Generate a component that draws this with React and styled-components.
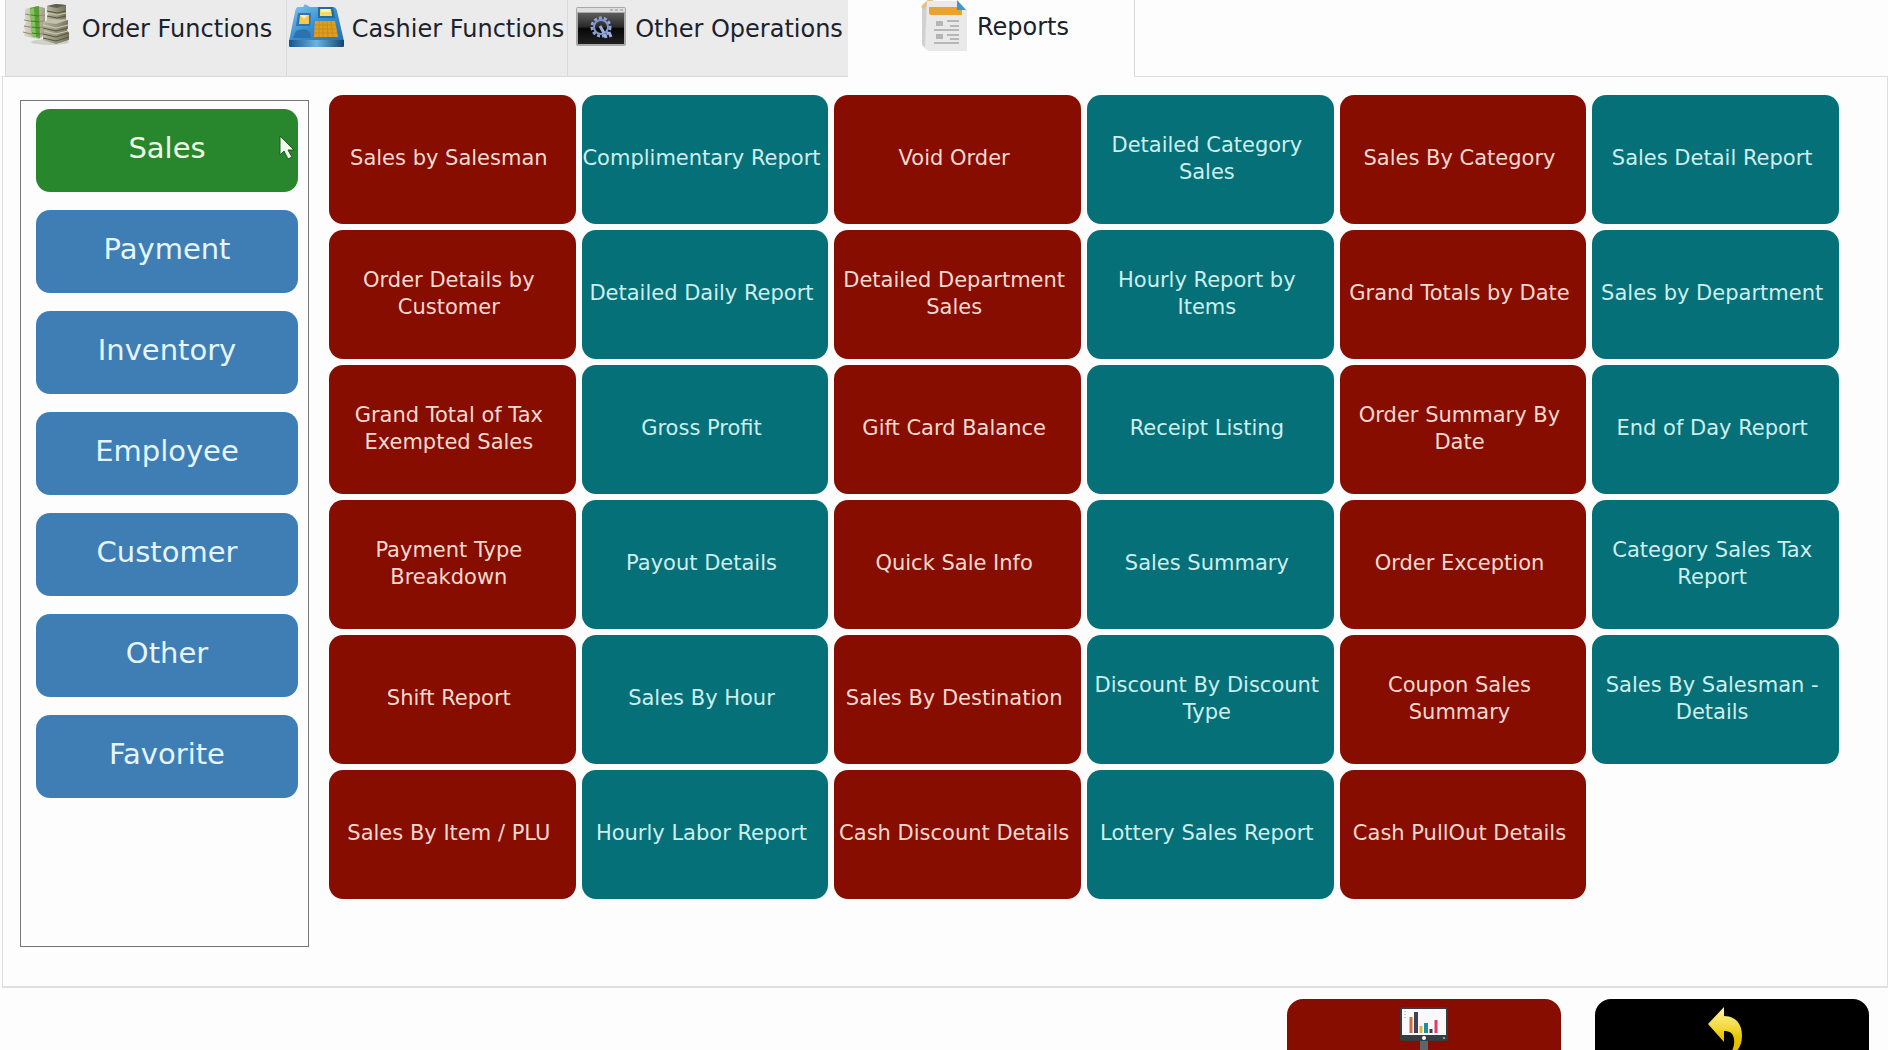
import React, { useState } from "react";
import styled, { createGlobalStyle } from "styled-components";

const GlobalStyle = createGlobalStyle`
  *, *::before, *::after { box-sizing: border-box; }
  body {
    margin: 0;
    background: #fdfdfd;
    font-family: "DejaVu Sans", Verdana, sans-serif;
  }
  button { font-family: inherit; cursor: pointer; }
`;

const Page = styled.div`
  height: 100vh;
  overflow: hidden;
  padding-left: 2px;
`;

const TabBar = styled.nav`
  display: flex;
  margin-bottom: -1px;
  padding-left: 3px;
`;

const Tab = styled.button`
  position: relative;
  display: flex;
  align-items: center;
  justify-content: center;
  gap: 8px;
  flex: 0 1 ${(p) => (p.$active ? 287 : 281)}px;
  height: 77px;
  padding: ${(p) => (p.$active ? "0 0 24px" : "0 2px 18px 0")};
  border: solid #d9d9d9;
  border-width: ${(p) => (p.$active ? "0 1px 0 0" : "0 0 1px 1px")};
  background: ${(p) => (p.$active ? "#fdfdfd" : "#ebebeb")};
  color: #1b222b;
  font-size: 24px;
  line-height: 28px;
  white-space: nowrap;

  svg { flex: none; }
`;

const Panel = styled.main`
  display: flex;
  align-items: flex-start;
  gap: 20px;
  padding: 18px 48px 39px 17px;
  border: 1px solid #dedede;
  border-bottom: 2px solid #e0e0e0;
`;

const Categories = styled.aside`
  flex: none;
  display: flex;
  flex-direction: column;
  gap: 18px;
  width: 289px;
  min-height: 847px;
  margin-top: 5px;
  padding: 8px 10px 8px 15px;
  border: 1px solid #757575;
`;

const CategoryButton = styled.button`
  position: relative;
  height: 83px;
  padding: 0 0 5px;
  border: 0;
  border-radius: 14px;
  background: ${(p) => (p.$active ? "#28872d" : "#3f7eb5")};
  color: ${(p) => (p.$active ? "#f0fbe6" : "#e6f5fc")};
  font-size: 29px;
  line-height: 34px;
`;

const Pointer = styled.svg`
  position: absolute;
  right: 3px;
  top: 26px;
`;

const ReportGrid = styled.section`
  flex: 1;
  display: grid;
  grid-template-columns: repeat(6, minmax(0, 1fr));
  grid-auto-rows: 129px;
  gap: 6px;
`;

const ReportTile = styled.button`
  padding: 0 7px 2px 0;
  border: 0;
  border-radius: 14px;
  background: ${(p) => (p.$tone === "red" ? "#870d00" : "#057077")};
  color: ${(p) => (p.$tone === "red" ? "#f5d9d0" : "#cdeeee")};
  font-size: 21px;
  line-height: 27px;
`;

const Footer = styled.footer`
  display: flex;
  justify-content: flex-end;
  gap: 34px;
  padding: 11px 19px 0 0;
`;

const ActionButton = styled.button`
  display: flex;
  justify-content: center;
  align-items: flex-start;
  width: 274px;
  height: 110px;
  padding: 8px 0 0;
  border: 0;
  border-radius: 16px;
  background: ${(p) => (p.$tone === "red" ? "#870d00" : "#000")};
`;

function MoneyIcon() {
  return (
    <svg width="56" height="56" viewBox="0 0 56 56" aria-hidden="true">
      <defs>
        <linearGradient id="billLight" x1="0" x2="1">
          <stop offset="0" stopColor="#d9d7c6" />
          <stop offset="1" stopColor="#a5a28a" />
        </linearGradient>
        <linearGradient id="billDark" x1="0" x2="1">
          <stop offset="0" stopColor="#b5b29c" />
          <stop offset="1" stopColor="#77745c" />
        </linearGradient>
      </defs>
      <ellipse cx="32" cy="41" rx="19" ry="3" fill="#cfcfcc" />
      <path d="M7 8l12-3 8 2v26l-6 5-15-3 1-5-1-5 2-4-1-6z" fill="url(#billLight)" />
      <path d="M7 13l10 2 10-1M6 19l11 2 10-1M6 25l11 2 10-1M5 31l12 3 10-2" fill="none" stroke="#8d8a72" />
      <path d="M12 7l9-2 1 32-8-2z" fill="#5a9c36" />
      <path d="M12 8l4-1 2 29-4-1z" fill="#86c45f" />
      <path d="M13 14l8 1M13 20l8 1M14 26l8 1M14 32l8 1" stroke="#42782a" />
      <path d="M29 5l9-2 10 1v17l-9 2-10-2v-5l1-3-1-3z" fill="url(#billDark)" />
      <path d="M29 5l9-2 10 1-9 3z" fill="#5f604c" />
      <path d="M29 10l10 2 9-2M29 15l10 2 9-2" fill="none" stroke="#55543f" />
      <path d="M29 12l10 2 9-2M29 18l10 2 9-2" fill="none" stroke="#c9c6b0" />
      <path d="M25 21l9-3 16 1v7l-1 3 2 3v7l-13 4-13-4v-6l2-3-2-3z" fill="url(#billDark)" />
      <path d="M25 21l9-3 16 1-12 4z" fill="#c4c1a9" />
      <path d="M25 27l13 3 12-3M25 33l13 3 13-4M25 37l13 3 13-4" fill="none" stroke="#55543f" />
      <path d="M25 24l13 3 12-3M26 30l12 3 12-3" fill="none" stroke="#cfccb6" />
    </svg>
  );
}

function RegisterIcon() {
  return (
    <svg width="56" height="56" viewBox="0 0 56 56" aria-hidden="true">
      <defs>
        <linearGradient id="registerBody" x1="0" y1="0" x2="1" y2="1">
          <stop offset="0" stopColor="#8acbf0" />
          <stop offset="0.5" stopColor="#3a8fce" />
          <stop offset="1" stopColor="#2372b4" />
        </linearGradient>
        <linearGradient id="registerBase" x1="0" x2="1">
          <stop offset="0" stopColor="#14568f" />
          <stop offset="0.5" stopColor="#69b4e4" />
          <stop offset="1" stopColor="#12466f" />
        </linearGradient>
      </defs>
      <path d="M10 6h5l2-3 5 3h23q3 0 4 4l7 30H1L7 11q1-5 3-5z" fill="url(#registerBody)" />
      <path d="M1 39h55v6q0 1-1 1H2q-1 0-1-1z" fill="url(#registerBase)" />
      <path d="M10 12h13l-1 13H8z" fill="#2c74b2" />
      <path d="M12 14h9v9h-10z" fill="#f0c94e" />
      <path d="M12 14h8l-4 4z" fill="#fff2a2" />
      <path d="M30 6h15l2 11H30z" fill="#246aa5" />
      <path d="M32 8h11l1 7H32z" fill="#f2dc64" />
      <path d="M33 8h9v3h-9z" fill="#fff4b0" />
      <path d="M27 20h20l3 16H26z" fill="#e0a01c" />
      <path d="M27 24h21M27 28h22M26 32h23M31 20v16M35 20v16M39 20l1 16M43 20l2 16" stroke="#c58c1f" />
      <path d="M8 30q9-4 14 1l1 6H5z" fill="#2a72b0" />
    </svg>
  );
}

function SettingsWindowIcon() {
  return (
    <svg width="56" height="56" viewBox="0 0 56 56" aria-hidden="true">
      <defs>
        <linearGradient id="windowBody" x1="0" y1="0" x2="0" y2="1">
          <stop offset="0" stopColor="#5c5c5c" />
          <stop offset="0.45" stopColor="#292929" />
          <stop offset="0.5" stopColor="#080808" />
          <stop offset="1" stopColor="#202020" />
        </linearGradient>
      </defs>
      <rect x="5" y="6" width="50" height="39" rx="2" fill="#a9a9a9" />
      <rect x="6" y="7" width="48" height="4" fill="#dedede" />
      <path d="M39 9h14" stroke="#919191" strokeDasharray="3 2" />
      <rect x="7" y="12" width="46" height="31" fill="url(#windowBody)" />
      <circle cx="30" cy="26" r="9" fill="none" stroke="#8fa5d8" strokeWidth="3" strokeDasharray="3 2" />
      <circle cx="30" cy="26" r="7" fill="none" stroke="#7f95cc" strokeWidth="2" />
      <path d="M29 25l4 7M34 33l1 4M38 31l2 5" stroke="#9aafe0" strokeWidth="3" />
    </svg>
  );
}

function ReportIcon() {
  return (
    <svg width="56" height="56" viewBox="0 0 56 56" aria-hidden="true">
      <path d="M9 6L16 0h4v50h-7l-4-4z" fill="#d1d1d1" />
      <path d="M8 8L15 1h5l-9 9z" fill="#e9bd83" />
      <path d="M14 2h31l9 9v41H16q-3-1-4-4z" fill="#e9e9e9" />
      <path d="M16 8h33v8H18q-2 0-2-2z" fill="#e9a42f" />
      <path d="M44 1l9 10h-9z" fill="#4395c6" />
      <rect x="23" y="22" width="7" height="5" fill="#b5b5b5" />
      <rect x="23" y="35" width="7" height="5" fill="#b5b5b5" />
      <path d="M34 22h12M37 27h9M21 31h25M34 36h12M37 40h9M21 44h25" stroke="#b7b7b7" strokeWidth="2" />
    </svg>
  );
}

function MonitorIcon() {
  return (
    <svg width="48" height="56" viewBox="0 0 48 56" aria-hidden="true">
      <rect x="0" y="0" width="48" height="34" rx="2" fill="#343d43" />
      <rect x="2" y="2" width="44" height="26" fill="#fbf8fb" />
      <path d="M5 4v9" stroke="#b9c7d5" strokeWidth="2" strokeDasharray="1 2" />
      <path d="M11 26V10" stroke="#c96a4b" strokeWidth="3" />
      <path d="M16 26V5" stroke="#42414f" strokeWidth="4" />
      <path d="M21 26v-7" stroke="#d9b93d" strokeWidth="3" />
      <path d="M26 26V16" stroke="#1b91a0" strokeWidth="4" />
      <path d="M31 26v-4" stroke="#373b4b" strokeWidth="3" />
      <path d="M36 26V13" stroke="#e23a63" strokeWidth="3" />
      <circle cx="24" cy="31" r="2" fill="#fff" />
      <path d="M43 31h2" stroke="#fff" />
      <path d="M20 34h8v14h-8z" fill="#5d666b" />
      <path d="M12 48h24v4H12z" fill="#343d43" />
    </svg>
  );
}

function BackIcon() {
  return (
    <svg width="48" height="56" viewBox="0 0 48 56" aria-hidden="true">
      <defs>
        <linearGradient id="backArrow" x1="0" y1="0" x2="0" y2="1">
          <stop offset="0" stopColor="#fff3a0" />
          <stop offset="0.4" stopColor="#f3d93c" />
          <stop offset="0.6" stopColor="#e8c500" />
          <stop offset="1" stopColor="#e0b800" />
        </linearGradient>
      </defs>
      <path
        d="M0 17L16 0v9c12 0 18 8 18 20 0 11-6 18-15 22 5-6 8-12 7-19-1-6-4-8-10-8v11z"
        fill="url(#backArrow)"
      />
    </svg>
  );
}

const tabs = [
  { label: "Order Functions", Icon: MoneyIcon },
  { label: "Cashier Functions", Icon: RegisterIcon },
  { label: "Other Operations", Icon: SettingsWindowIcon },
  { label: "Reports", Icon: ReportIcon },
];

const categories = ["Sales", "Payment", "Inventory", "Employee", "Customer", "Other", "Favorite"];

const reports = [
  "Sales by Salesman", "Complimentary Report", "Void Order", "Detailed Category Sales", "Sales By Category", "Sales Detail Report",
  "Order Details by Customer", "Detailed Daily Report", "Detailed Department Sales", "Hourly Report by Items", "Grand Totals by Date", "Sales by Department",
  "Grand Total of Tax Exempted Sales", "Gross Profit", "Gift Card Balance", "Receipt Listing", "Order Summary By Date", "End of Day Report",
  "Payment Type Breakdown", "Payout Details", "Quick Sale Info", "Sales Summary", "Order Exception", "Category Sales Tax Report",
  "Shift Report", "Sales By Hour", "Sales By Destination", "Discount By Discount Type", "Coupon Sales Summary", "Sales By Salesman - Details",
  "Sales By Item / PLU", "Hourly Labor Report", "Cash Discount Details", "Lottery Sales Report", "Cash PullOut Details",
];

export default function App() {
  const [tab, setTab] = useState("Reports");
  const [category, setCategory] = useState("Sales");

  return (
    <Page>
      <GlobalStyle />
      <TabBar>
        {tabs.map(({ label, Icon }) => (
          <Tab key={label} type="button" $active={label === tab} onClick={() => setTab(label)}>
            <Icon />
            {label}
          </Tab>
        ))}
      </TabBar>
      <Panel>
        <Categories>
          {categories.map((name) => (
            <CategoryButton key={name} type="button" $active={name === category} onClick={() => setCategory(name)}>
              {name}
              {name === "Sales" && (
                <Pointer width="16" height="26" viewBox="0 0 16 26" aria-hidden="true">
                  <path d="M1 1v19l4-4 4 8 4-2-4-7h6z" fill="#f2fbee" stroke="#1d5a20" strokeWidth="1" />
                </Pointer>
              )}
            </CategoryButton>
          ))}
        </Categories>
        <ReportGrid>
          {reports.map((name, i) => (
            <ReportTile key={name} type="button" $tone={i % 2 ? "teal" : "red"}>
              {name}
            </ReportTile>
          ))}
        </ReportGrid>
      </Panel>
      <Footer>
        <ActionButton type="button" $tone="red" aria-label="View report">
          <MonitorIcon />
        </ActionButton>
        <ActionButton type="button" $tone="black" aria-label="Back">
          <BackIcon />
        </ActionButton>
      </Footer>
    </Page>
  );
}
